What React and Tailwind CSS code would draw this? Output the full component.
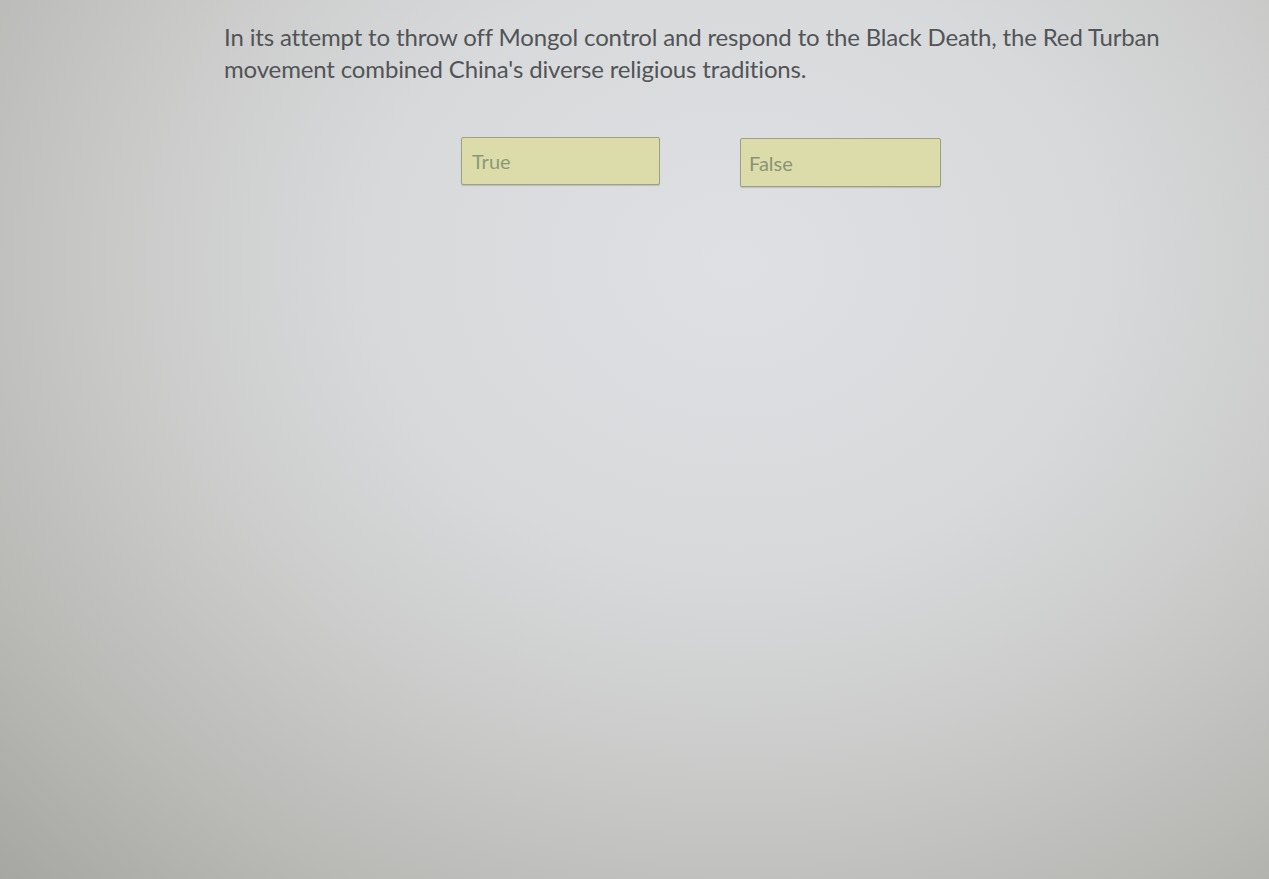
export default function App() {
  return (
    <div className="h-[879px] w-[1269px] overflow-hidden bg-[radial-gradient(ellipse_at_58%_30%,#dfe0e3_0%,#d8d9db_35%,#c9cac8_60%,#b9b9b6_80%,#a6a6a2_100%)] font-['Lato',sans-serif]">
      <div className="pl-[224px] pt-[21px]">
        <p className="w-[960px] text-[24px] leading-[32px] tracking-[-0.15px] text-[#515557]">
          In its attempt to throw off Mongol control and respond to the Black Death, the Red Turban
          movement combined China's diverse religious traditions.
        </p>
        <div className="mt-[52px] flex gap-[80px] pl-[237px]">
          <div className="flex h-[48px] w-[199px] items-center rounded-[2px] border border-[#9ea285] bg-[#dcdcaa] px-[10px] text-[20px] text-[#8c9a74] shadow-[0_1px_1px_rgba(0,0,0,0.15)]">
            True
          </div>
          <div className="mt-[1px] flex h-[49px] w-[201px] items-center rounded-[2px] border border-[#9ea285] bg-[#dcdcaa] px-[8px] text-[20px] text-[#8c9278] shadow-[0_1px_1px_rgba(0,0,0,0.15)]">
            False
          </div>
        </div>
      </div>
    </div>
  );
}
